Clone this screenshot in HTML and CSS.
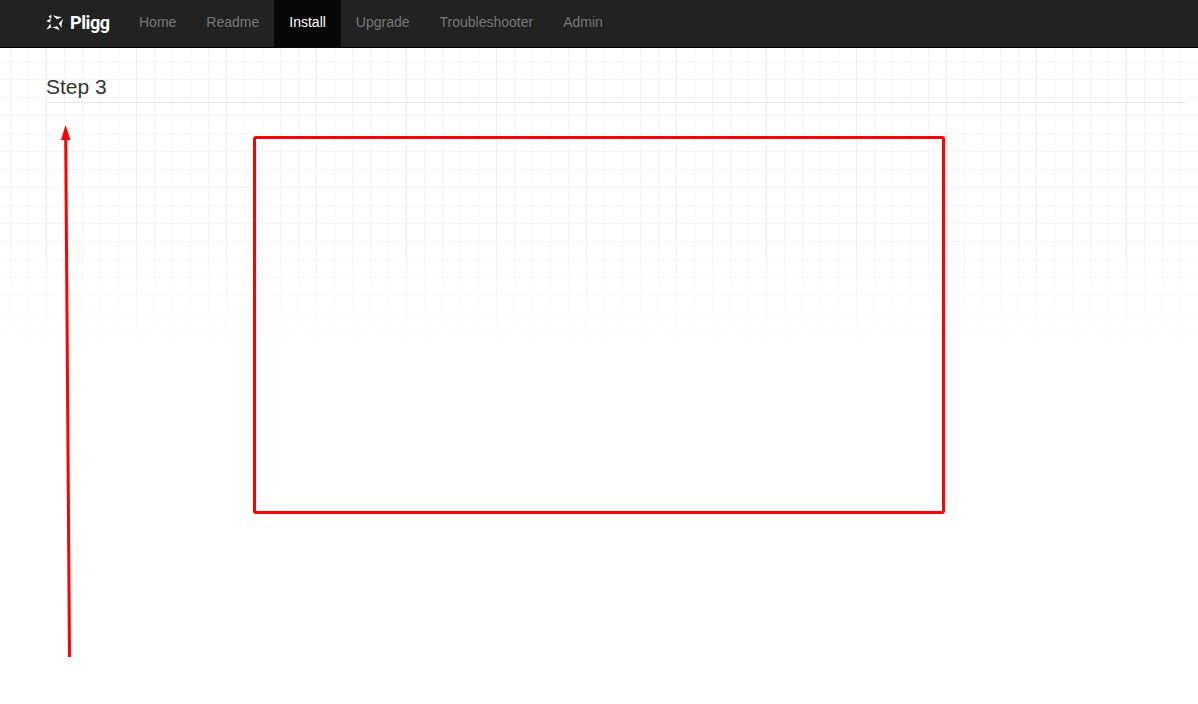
FILE: index.html
```html
<!DOCTYPE html>
<html lang="en">
<head>
  <meta charset="UTF-8" />
  <title>Pligg Install - Step 3</title>
  <link rel="stylesheet" href="styles.css">
</head>
<body>
  <nav class="navbar">
    <a href="#" class="navbar__brand">
      <svg class="navbar__logo" width="20" height="20" viewBox="1 0 20 20">
        <path d="M8 2.2Q12 4 17 4L12 6.2Q10 4.5 8 2.2z" fill="#fff" />
        <path d="M18.2 6Q16.2 10 16.4 15L13.8 10.2Q15.8 8.4 18.2 6z" fill="#fff" />
        <path d="M14.8 17.6Q11 15 7 14.6L12.2 13.2Q13.6 15 14.8 17.6z" fill="#fff" />
        <path d="M1.4 16.4Q4 13.6 5 10.6L6.4 14.4Q4 15.4 1.4 16.4z" fill="#fff" />
        <path d="M1.2 8Q3 7.4 5.8 5.2L5.2 9.4Q3 8.6 1.2 8z" fill="#fff" />
        <path d="M6.2 1.4Q6.6 3.6 6.2 5.6L3.4 3.6Q5 3 6.2 1.4z" fill="#fff" />
      </svg>
      <span class="navbar__name">Pligg</span>
    </a>
    <ul class="navbar__links">
      <li><a href="#" class="navbar__link">Home</a></li>
      <li><a href="#" class="navbar__link">Readme</a></li>
      <li><a href="#" class="navbar__link navbar__link--active">Install</a></li>
      <li><a href="#" class="navbar__link">Upgrade</a></li>
      <li><a href="#" class="navbar__link">Troubleshooter</a></li>
      <li><a href="#" class="navbar__link">Admin</a></li>
    </ul>
  </nav>

  <section class="content">
    <h2 class="content__title">Step 3</h2>
  </section>

  <!-- red annotations drawn over the page -->
  <svg class="markup" width="1198" height="704" viewBox="0 0 1198 704">
    <rect x="254.5" y="137.5" width="689" height="375" rx="1.5" fill="none" stroke="#f00" stroke-width="3" />
    <line x1="69.5" y1="657" x2="65.7" y2="136" stroke="#f00" stroke-width="3" />
    <polygon points="65.5,125 70.5,140 61,140" fill="#f00" />
  </svg>
</body>
</html>
```

FILE: styles.css
```css
html, body {
  height: 100%;
}
body {
  margin: 0;
  font-family: "Liberation Sans", Arial, sans-serif;
  font-size: 14px;
  color: #333;
  overflow: hidden;
  background-color: #fff;
  background-image:
    linear-gradient(to bottom, rgba(255,255,255,0) 235px, #fff 355px),
    linear-gradient(to right, #eee 1px, transparent 1px),
    linear-gradient(to right, #f4f4f4 1px, transparent 1px),
    linear-gradient(to bottom, #f4f4f4 1px, transparent 1px);
  background-size: 100% 100%, 90px 90px, 18px 18px, 18px 18px;
  background-position: 0 0, 46px 0, 10px 0, 0 7px;
}

.navbar {
  display: flex;
  height: 47px;
  padding-left: 46px;
  background: #222;
  border-bottom: 1px solid #080808;
}
.navbar__brand {
  display: flex;
  align-items: center;
  gap: 4px;
  width: 78px;
  padding-bottom: 2px;
  box-sizing: border-box;
  text-decoration: none;
}
.navbar__name {
  font-family: "Roboto", sans-serif;
  font-size: 18px;
  font-weight: 700;
  letter-spacing: -0.4px;
  color: #fff;
}
.navbar__links {
  display: flex;
  list-style: none;
  margin: 0;
  padding: 0;
}
.navbar__link {
  display: block;
  padding: 0 15px;
  line-height: 45px;
  height: 47px;
  color: #777;
  text-decoration: none;
}
.navbar__link--active {
  color: #fff;
  background: #080808;
}

.content {
  padding: 26px 12px 0 46px;
}
.content__title {
  margin: 0;
  padding-bottom: 3px;
  font-size: 21px;
  font-weight: 400;
  line-height: 25px;
  color: #333;
  border-bottom: 1px solid #e6e6e6;
}

.markup {
  position: absolute;
  top: 0;
  left: 0;
}
```
